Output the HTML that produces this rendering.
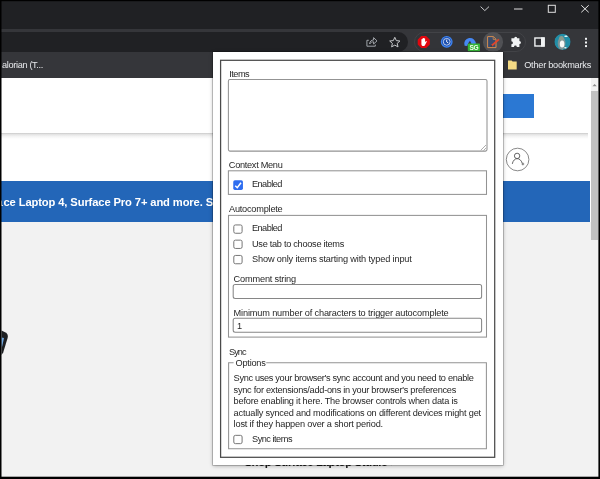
<!DOCTYPE html>
<html><head><meta charset="utf-8"><title>Extension options popup</title>
<style>
html,body{margin:0;padding:0;background:#000;}
body{width:600px;height:479px;position:relative;overflow:hidden;font-family:"Liberation Sans", sans-serif;}
.b{position:absolute;box-sizing:border-box;}
.t{position:absolute;white-space:nowrap;}
svg{position:absolute;overflow:visible}
</style></head><body><div id="shot" style="position:absolute;left:0;top:0;width:600px;height:479px;filter:blur(0.32px)">
<!-- window frame -->
<div class="b" style="left:1px;top:1px;width:598.00px;height:27.50px;background:#202124"></div>
<div class="b" style="left:1px;top:28.5px;width:598.00px;height:49.50px;background:#35363a"></div>
<div class="b" style="left:1px;top:32px;width:406.50px;height:20.00px;background:#202124;border-radius:0 10px 10px 0"></div>
<div class="b" style="left:413.5px;top:32px;width:112.80px;height:20.00px;background:#333438;border:1px solid #424347;border-radius:10px"></div>
<div class="b" style="left:483px;top:32.4px;width:19.60px;height:19.60px;background:#505155;border-radius:50%"></div>
<!-- window controls -->
<svg class="b" style="left:0;top:0" width="600" height="80" viewBox="0 0 600 80">
 <path d="M480.6 6.6 L484.8 10.6 L489 6.6" fill="none" stroke="#c9cacc" stroke-width="1"/>
 <path d="M514 9 H522.5" stroke="#e0e0e0" stroke-width="1"/>
 <rect x="548.3" y="5.3" width="7" height="7" fill="none" stroke="#e0e0e0" stroke-width="1"/>
 <path d="M581.3 5.3 L588.7 12.3 M588.7 5.3 L581.3 12.3" stroke="#e8e8e8" stroke-width="1"/>
 <!-- share -->
 <g fill="none" stroke="#9fa3a8" stroke-width="1">
  <path d="M368.8 40.3 H366.9 V46.2 H375.3 V44.6"/>
  <path d="M369.6 44 C369.8 41.2 371.5 40 373.6 40 V37.6 L377 40.9 L373.6 44 V41.8 C372 41.8 370.6 42.4 369.6 44 Z"/>
 </g>
 <!-- star -->
 <path d="M394.8 37.3 L396.3 40.6 L399.9 41 L397.2 43.4 L398 46.9 L394.8 45.1 L391.6 46.9 L392.4 43.4 L389.7 41 L393.3 40.6 Z" fill="none" stroke="#c6c8ca" stroke-width="1" stroke-linejoin="round"/>
 <!-- red stop hand -->
 <path d="M421.5 36.8 H425.9 L429.1 39.9 V44.2 L425.9 47.3 H421.5 L418.4 44.2 V39.9 Z" fill="#e2070f" stroke="#e2070f" stroke-width="1.4" stroke-linejoin="round"/>
 <path d="M421.4 41.6 V39.3 H422.3 V38.5 H423.2 V38 H424.2 V38.6 H425.1 V42 L426.3 41 L426.9 41.6 L425.3 44.6 C425 45.6 424.2 46.1 423.3 46.1 C422 46.1 421.4 45.3 421.4 44 Z" fill="#fff"/>
 <!-- blue clock -->
 <circle cx="446.7" cy="41.8" r="5.9" fill="#3f86f5"/>
 <circle cx="446.7" cy="41.8" r="4.7" fill="#1d4fae"/>
 <circle cx="446.7" cy="41.8" r="3.4" fill="#1d4fae" stroke="#dfe8fb" stroke-width="0.8"/>
 <path d="M446.7 39.6 V41.9 L448.3 43" fill="none" stroke="#fff" stroke-width="0.9"/>
 <!-- blue gauge -->
 <path d="M464.6 45.8 A5.8 5.8 0 1 1 475.8 44 L471.5 44 L470 40.8 L468.2 43.2 L467.2 46 Z" fill="#4688f4"/>
 <rect x="467.8" y="43.4" width="12.2" height="7.9" rx="0.8" fill="#36b536"/>
 <text x="473.9" y="50" font-size="6.6" font-weight="700" fill="#f4fff0" text-anchor="middle" font-family="Liberation Sans, sans-serif" letter-spacing="-0.3">SG</text>
 <!-- doc + pencil -->
 <path d="M487.6 36.6 H493.4 L496 39.2 V47.6 H487.6 Z" fill="#3a4b6b" stroke="#d38d4f" stroke-width="1"/>
 <path d="M493.2 36.8 V39.4 H495.8" fill="none" stroke="#d38d4f" stroke-width="0.8"/>
 <path d="M498.9 39.4 L491.6 45.7" stroke="#e2452c" stroke-width="1.9"/>
 <path d="M491.9 45.4 L490.6 46.6" stroke="#3b3b3b" stroke-width="1.4"/>
 <!-- puzzle -->
 <path d="M514.2 38.3 a1.5 1.5 0 0 1 3 0 h2.2 v2.6 a1.55 1.55 0 0 1 0 3.1 v2.9 h-2.6 a1.4 1.4 0 0 0 -2.8 0 h-2.6 v-2.7 a1.5 1.5 0 0 0 0 -3 v-2.9 Z" fill="#f1f3f4"/>
 <!-- side panel -->
 <rect x="534.9" y="38" width="9.2" height="8" fill="#2e2f33" stroke="#f1f3f4" stroke-width="1.4"/>
 <rect x="541" y="37.4" width="3.7" height="9.2" fill="#f1f3f4"/>
 <!-- avatar -->
 <circle cx="562.5" cy="41.9" r="8.2" fill="#218ea7"/>
 <ellipse cx="561.6" cy="43.4" rx="3.9" ry="6.4" fill="#7c9497"/>
 <ellipse cx="561.4" cy="38.3" rx="2.4" ry="2.2" fill="#8a9a8c"/>
 <ellipse cx="562.1" cy="44" rx="2.3" ry="3.6" fill="#f8f8f6"/>
 <ellipse cx="566" cy="36.3" rx="1.8" ry="0.8" fill="#eef6f7"/>
 <ellipse cx="565.4" cy="47.7" rx="1.3" ry="0.7" fill="#f2f2f0"/>
 <circle cx="562.5" cy="41.9" r="8.6" fill="none" stroke="#35363a" stroke-width="0.9"/>
 <!-- dots -->
 <rect x="585" y="37.8" width="2" height="2" fill="#f1f3f4"/><rect x="585" y="41.5" width="2" height="2" fill="#f1f3f4"/><rect x="585" y="45.1" width="2" height="2" fill="#f1f3f4"/>
 <!-- folder -->
 <path d="M508 60.6 H511.6 L512.6 61.6 H516.7 V69.5 H508 Z" fill="#f4da84"/>
</svg>
<span class="t" style="left:2.00px;top:59.79px;font-size:9.2px;line-height:11.04px;letter-spacing:-0.343px;font-weight:400;color:#e8eaed">alorian (T...</span>
<span class="t" style="left:524.20px;top:59.79px;font-size:9.2px;line-height:11.04px;letter-spacing:-0.245px;font-weight:400;color:#e8eaed">Other bookmarks</span>
<!-- page -->
<div class="b" style="left:1px;top:78px;width:598.00px;height:399.00px;background:#fff"></div>
<div class="b" style="left:1px;top:133px;width:587.30px;height:6.00px;background:linear-gradient(#c8c8c8 0,#e2e2e2 20%,#f3f3f3 55%,#fff 100%)"></div>
<div class="b" style="left:500px;top:93.8px;width:34.20px;height:24.50px;background:#2b78d3"></div>
<svg class="b" style="left:500px;top:140px" width="40" height="40" viewBox="500 140 40 40">
 <circle cx="517.6" cy="159.5" r="11.3" fill="#fff" stroke="#6b6b6b" stroke-width="0.8"/>
 <circle cx="517.1" cy="155.9" r="2.7" fill="none" stroke="#555" stroke-width="0.9"/>
 <path d="M512.3 163.9 C513.6 157 520.4 157 522.2 163.2" fill="none" stroke="#555" stroke-width="0.9"/>
 <path d="M521.6 164 H524.2 M522.9 162.7 V165.3" stroke="#555" stroke-width="0.8"/>
</svg>
<div class="b" style="left:1px;top:180.6px;width:588.8px;height:41.4px;background:#2366b8;overflow:hidden"><span class="t" style="left:2.50px;top:15.70px;font-size:11.2px;line-height:13.44px;letter-spacing:-0.120px;font-weight:700;color:#fff">ce Laptop 4, Surface Pro 7+ and more. S</span><span class="t" style="left:-4.40px;top:15.70px;font-size:11.2px;line-height:13.44px;letter-spacing:0.000px;font-weight:700;color:#fff">a</span></div>
<div class="b" style="left:1px;top:222px;width:589.50px;height:255.00px;background:#f2f2f2"></div>
<svg class="b" style="left:0;top:325px" width="12" height="35" viewBox="0 325 12 35">
 <path d="M1.5 330.4 L5.6 332.6 Q8.6 334.6 7.6 338 L3.2 352.6 L1.5 355 Z" fill="#1d1f22"/>
 <path d="M1.5 337.5 L4 338 L2.2 346.5 L1.5 347 Z" fill="#6fa6dd"/>
</svg>
<span class="t" style="left:244.4px;top:455.4px;font-size:11.4px;line-height:15px;font-weight:700;color:#1a1a1a;letter-spacing:-0.38px">Shop Surface Laptop Studio &gt;</span>
<!-- scrollbar -->
<div class="b" style="left:590.5px;top:78px;width:8.50px;height:399.00px;background:#f1f1f1"></div>
<div class="b" style="left:591.2px;top:91px;width:6.80px;height:149.00px;background:#c1c1c1"></div>
<svg class="b" style="left:590px;top:80px" width="9" height="9" viewBox="590 80 9 9"><path d="M592.4 86.3 L594.6 84 L596.8 86.3 Z" fill="#8a8a8a"/></svg>
<!-- popup -->
<div class="b" style="left:213px;top:52px;width:289.50px;height:413.00px;background:#fff;box-shadow:0 0 0 0.7px rgba(0,0,0,0.28),0 1px 4px rgba(0,0,0,0.3)"></div>
<svg class="b" style="left:0;top:0" width="600" height="479" viewBox="0 0 600 479" fill="none">
 <rect x="220.6" y="60.3" width="274.1" height="397" stroke="#4a4a4a" stroke-width="1.25"/>
 <g stroke="#939393" stroke-width="1.05">
  <rect x="228.4" y="79.5" width="258.6" height="71.6" rx="1.5"/>
  <rect x="228.4" y="170.8" width="258.1" height="23.6"/>
  <rect x="228.5" y="215.4" width="258" height="121.7"/>
  <rect x="233.2" y="284.5" width="248.4" height="13.9" rx="2" stroke="#868686"/>
  <rect x="233.2" y="318.3" width="248.4" height="14" rx="2" stroke="#868686"/>
  <path d="M233.6 362.8 H228.6 V448.8 H486.4 V362.8 H266.2"/>
 </g>
 <path d="M480.8 150.2 L486 145 M483.6 150.4 L486.2 147.8" stroke="#8a8a8a" stroke-width="0.7"/>
 <rect x="233.25" y="180.25" width="9.7" height="9.7" rx="1.7" fill="#2e6df0" stroke="none"/><path d="M235.25 185.75 L237.25 187.70 L241.00 182.75" fill="none" stroke="#fff" stroke-width="1.5"/>
 <rect x="233.80" y="224.95" width="8.3" height="8.3" rx="1.6" fill="#fff" stroke="#767676" stroke-width="1"/>
 <rect x="233.80" y="240.15" width="8.3" height="8.3" rx="1.6" fill="#fff" stroke="#767676" stroke-width="1"/>
 <rect x="233.80" y="255.45" width="8.3" height="8.3" rx="1.6" fill="#fff" stroke="#767676" stroke-width="1"/>
 <rect x="233.80" y="435.35" width="8.3" height="8.3" rx="1.6" fill="#fff" stroke="#767676" stroke-width="1"/>
</svg>
<span class="t" style="left:229.20px;top:69.19px;font-size:9.2px;line-height:11.04px;letter-spacing:-0.494px;font-weight:400;color:#262626">Items</span>
<span class="t" style="left:228.80px;top:160.19px;font-size:9.2px;line-height:11.04px;letter-spacing:-0.292px;font-weight:400;color:#262626">Context Menu</span>
<span class="t" style="left:252.00px;top:178.89px;font-size:9.2px;line-height:11.04px;letter-spacing:-0.574px;font-weight:400;color:#262626">Enabled</span>
<span class="t" style="left:229.00px;top:204.39px;font-size:9.2px;line-height:11.04px;letter-spacing:-0.224px;font-weight:400;color:#262626">Autocomplete</span>
<span class="t" style="left:252.00px;top:223.19px;font-size:9.2px;line-height:11.04px;letter-spacing:-0.574px;font-weight:400;color:#262626">Enabled</span>
<span class="t" style="left:252.00px;top:238.59px;font-size:9.2px;line-height:11.04px;letter-spacing:-0.285px;font-weight:400;color:#262626">Use tab to choose items</span>
<span class="t" style="left:252.00px;top:253.79px;font-size:9.2px;line-height:11.04px;letter-spacing:-0.153px;font-weight:400;color:#262626">Show only items starting with typed input</span>
<span class="t" style="left:233.60px;top:273.79px;font-size:9.2px;line-height:11.04px;letter-spacing:-0.175px;font-weight:400;color:#262626">Comment string</span>
<span class="t" style="left:233.60px;top:307.59px;font-size:9.2px;line-height:11.04px;letter-spacing:-0.157px;font-weight:400;color:#262626">Minimum number of characters to trigger autocomplete</span>
<span class="t" style="left:237.00px;top:320.59px;font-size:9.2px;line-height:11.04px;letter-spacing:0.000px;font-weight:400;color:#262626">1</span>
<span class="t" style="left:229.00px;top:346.59px;font-size:9.2px;line-height:11.04px;letter-spacing:-0.959px;font-weight:400;color:#262626">Sync</span>
<span class="t" style="left:235.60px;top:358.19px;font-size:9.2px;line-height:11.04px;letter-spacing:-0.239px;font-weight:400;color:#262626">Options</span>
<span class="t" style="left:233.60px;top:373.19px;font-size:9.2px;line-height:11.04px;letter-spacing:-0.320px;font-weight:400;color:#262626">Sync uses your browser's sync account and you need to enable</span>
<span class="t" style="left:233.60px;top:384.59px;font-size:9.2px;line-height:11.04px;letter-spacing:-0.259px;font-weight:400;color:#262626">sync for extensions/add-ons in your browser's preferences</span>
<span class="t" style="left:233.60px;top:396.09px;font-size:9.2px;line-height:11.04px;letter-spacing:-0.212px;font-weight:400;color:#262626">before enabling it here. The browser controls when data is</span>
<span class="t" style="left:233.60px;top:407.59px;font-size:9.2px;line-height:11.04px;letter-spacing:-0.186px;font-weight:400;color:#262626">actually synced and modifications on different devices might get</span>
<span class="t" style="left:233.60px;top:419.09px;font-size:9.2px;line-height:11.04px;letter-spacing:-0.172px;font-weight:400;color:#262626">lost if they happen over a short period.</span>
<span class="t" style="left:252.00px;top:433.79px;font-size:9.2px;line-height:11.04px;letter-spacing:-0.494px;font-weight:400;color:#262626">Sync items</span>
<!-- frame edge softening -->
<div class="b" style="left:1px;top:0px;width:1.00px;height:479.00px;background:rgba(0,0,0,0.5)"></div>
<div class="b" style="left:598px;top:0px;width:1.00px;height:479.00px;background:rgba(0,0,0,0.6)"></div>
<div class="b" style="left:0px;top:476px;width:600.00px;height:1.00px;background:rgba(0,0,0,0.3)"></div>
<div class="b" style="left:0px;top:1px;width:600.00px;height:1.00px;background:rgba(0,0,0,0.2)"></div>
</div></body></html>
